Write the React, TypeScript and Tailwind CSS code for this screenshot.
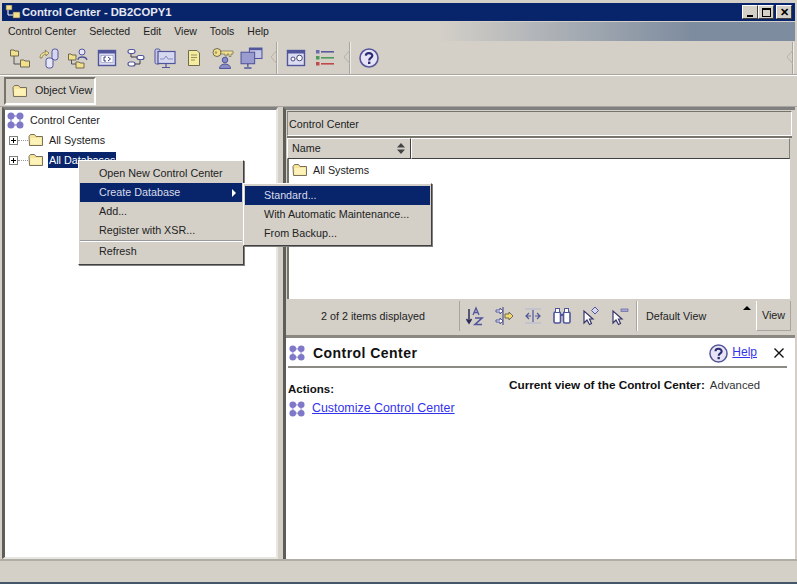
import React from "react";

function Folder({ className = "w-[16px] h-[14px]" }: { className?: string }) {
  return (
    <svg viewBox="0 0 16 14" className={className}>
      <path d="M1 3.5 L2.5 1.5 H6.5 L8 3.5 H14.5 V12.5 H1.5 Z" fill="#f7e49a" stroke="#77705a" strokeWidth="1" />
      <path d="M2.5 5 H13.5 V11.5 H2.5 Z" fill="#fdf2b8" />
    </svg>
  );
}

function Db2Logo({ className = "w-[17px] h-[17px]" }: { className?: string }) {
  return (
    <svg viewBox="0 0 17 17" className={className}>
      <rect x="4" y="4" width="9" height="9" fill="none" stroke="#b9b6e2" strokeWidth="2" />
      <circle cx="4" cy="4" r="3.5" fill="#7f78c8" />
      <circle cx="13" cy="4" r="3.5" fill="#7f78c8" />
      <circle cx="4" cy="13" r="3.5" fill="#7f78c8" />
      <circle cx="13" cy="13" r="3.5" fill="#7f78c8" />
    </svg>
  );
}

function HelpCircle({ className = "w-[20px] h-[20px]" }: { className?: string }) {
  return (
    <svg viewBox="0 0 20 20" className={className}>
      <circle cx="10" cy="10" r="9" fill="#e6e4f6" stroke="#55559a" strokeWidth="1.6" />
      <path d="M6.8 7.6 C7 4.2 13.4 4.2 13.3 7.8 C13.2 10 10.2 9.8 10.2 12.4" fill="none" stroke="#2a2a70" strokeWidth="2.2" />
      <rect x="9" y="13.6" width="2.4" height="2.4" fill="#2a2a70" />
    </svg>
  );
}

const yellow = "#f3e08c";
const edge = "#6f6a50";
const blue = "#50559c";

function ToolIcon({ name }: { name: string }) {
  const box = "w-[22px] h-[22px]";
  if (name === "tree")
    return (
      <svg viewBox="0 0 22 22" className={box}>
        <path d="M5 8 V17 H11" fill="none" stroke="#555" />
        <path d="M1.5 3 H5 L6 4 H9.5 V9 H1.5 Z" fill={yellow} stroke={edge} />
        <path d="M11.5 13 H15 L16 14 H20.5 V20 H11.5 Z" fill={yellow} stroke={edge} />
      </svg>
    );
  if (name === "db")
    return (
      <svg viewBox="0 0 22 22" className={box}>
        <path d="M2 11 C2 7 5 5 8 5 L7 3 L11 6 L8 9 L8 7 C6 7 4 9 4 11 Z" fill={yellow} stroke={edge} strokeWidth="0.7" />
        <rect x="14" y="2" width="6" height="11" rx="2.5" fill="#d6d6ee" stroke={blue} />
        <rect x="8" y="11" width="7" height="10" rx="2.5" fill="#e6e6f6" stroke={blue} />
      </svg>
    );
  if (name === "people")
    return (
      <svg viewBox="0 0 22 22" className={box}>
        <path d="M1.5 7 H4 L5 8 H9 V13 H1.5 Z" fill={yellow} stroke={edge} />
        <path d="M9 15 H12 L13 16 H17 V21 H9 Z" fill={yellow} stroke={edge} />
        <path d="M4.5 13 V17 H9" fill="none" stroke="#555" />
        <circle cx="15" cy="5" r="3" fill="#e6e6f6" stroke={blue} />
        <path d="M11 13 C11 9 19 9 20 13" fill="none" stroke={blue} strokeWidth="1.3" />
      </svg>
    );
  if (name === "cmd")
    return (
      <svg viewBox="0 0 22 22" className={box}>
        <rect x="2.5" y="3.5" width="17" height="15" fill="#dcdcf0" stroke={blue} strokeWidth="1.4" />
        <rect x="3" y="4" width="16" height="2.5" fill={blue} />
        <rect x="5" y="8.5" width="12" height="7" fill="#fff" stroke="#8a8ac0" strokeWidth="0.6" />
        <path d="M10 10 H8 V14 H10 M12 10 L14.5 12 L12 14" fill="none" stroke="#333a80" strokeWidth="1" />
      </svg>
    );
  if (name === "flow")
    return (
      <svg viewBox="0 0 22 22" className={box}>
        <rect x="3" y="2.5" width="7" height="4" rx="2" fill="#fff" stroke={blue} strokeWidth="1.2" />
        <rect x="12" y="8.5" width="7" height="4" rx="2" fill="#fff" stroke={blue} strokeWidth="1.2" />
        <rect x="3" y="15" width="7" height="4" rx="2" fill="#fff" stroke={blue} strokeWidth="1.2" />
        <path d="M6 7 V10 H12 M15 13 V17 H10" fill="none" stroke="#3c3c44" />
      </svg>
    );
  if (name === "monitor")
    return (
      <svg viewBox="0 0 22 22" className="w-[24px] h-[22px]">
        <rect x="1" y="2" width="5" height="15" rx="1.5" fill="#c8c8e6" stroke={blue} />
        <rect x="4" y="4.5" width="17" height="12" fill="#d6d8ee" stroke={blue} strokeWidth="1.2" />
        <path d="M6 12 H10 L12 9 L14 12 H19" fill="none" stroke="#8a8ac8" />
        <path d="M12 17 V20 M8 20.5 H16" stroke={blue} strokeWidth="1.2" />
      </svg>
    );
  if (name === "note")
    return (
      <svg viewBox="0 0 22 22" className={box}>
        <path d="M5.5 3.5 H14 L16.5 6 V18.5 H5.5 Z" fill="#f6ec9e" stroke={edge} />
        <path d="M8 8 H14 M8 10.5 H14 M8 13 H12" stroke="#9a9060" />
      </svg>
    );
  if (name === "key")
    return (
      <svg viewBox="0 0 22 22" className={box}>
        <circle cx="5" cy="5.5" r="4" fill={yellow} stroke={edge} />
        <circle cx="4" cy="5.5" r="1.2" fill="#a89a50" />
        <path d="M9 4 H21 V7 H19 V9.5 H17 V7 H15 V9 H13 V7 H9 Z" fill={yellow} stroke={edge} strokeWidth="0.7" />
        <circle cx="13" cy="13" r="2.8" fill="#8a8cc4" stroke={blue} />
        <path d="M7.5 21.5 C7.5 15.5 18.5 15.5 18.5 21.5 Z" fill="#8a8cc4" stroke={blue} />
      </svg>
    );
  if (name === "screens")
    return (
      <svg viewBox="0 0 22 22" className="w-[23px] h-[23px]">
        <rect x="9" y="1" width="12" height="10" fill="#c4c6e6" stroke={blue} />
        <rect x="9" y="1" width="12" height="2" fill={blue} />
        <rect x="1" y="5" width="13" height="11" fill="#9a9cd0" stroke={blue} />
        <path d="M7.5 16 V19 M4 20 H11" stroke={blue} strokeWidth="1.4" />
      </svg>
    );
  if (name === "settings")
    return (
      <svg viewBox="0 0 22 22" className={box}>
        <rect x="2.5" y="3.5" width="17" height="15" fill="#dcdcf0" stroke={blue} strokeWidth="1.4" />
        <rect x="3" y="4" width="16" height="2.5" fill={blue} />
        <circle cx="8" cy="12" r="2" fill="#fff" stroke="#444a80" />
        <circle cx="14.5" cy="11" r="2.8" fill="#fff" stroke="#444a80" />
      </svg>
    );
  return (
    <svg viewBox="0 0 22 22" className={box}>
      <rect x="2" y="3" width="3.5" height="3.5" fill="#6a6ab0" />
      <rect x="2" y="9" width="3.5" height="3.5" fill="#4f9a5a" />
      <rect x="2" y="15" width="3.5" height="3.5" fill="#c04a4a" />
      <rect x="7" y="4" width="13" height="1.6" fill="#5a5aa0" />
      <rect x="7" y="10" width="13" height="1.6" fill="#4f9a5a" />
      <rect x="7" y="16" width="13" height="1.6" fill="#c04a4a" />
    </svg>
  );
}

function BarIcon({ name }: { name: string }) {
  const box = "w-[20px] h-[20px]";
  if (name === "sort")
    return (
      <svg viewBox="0 0 20 20" className={box}>
        <path d="M4 3 V16 M1.5 13 L4 17 L6.5 13" fill="none" stroke="#2c2c58" strokeWidth="1.5" />
        <path d="M8 9 L11 2 L14 9 M9.2 6.5 H12.8" fill="none" stroke={blue} strokeWidth="1.3" />
        <path d="M10 12 H17 L10 18.5 H17" fill="none" stroke={blue} strokeWidth="1.6" />
      </svg>
    );
  if (name === "filter")
    return (
      <svg viewBox="0 0 20 20" className={box}>
        <path d="M9 1 V19" stroke="#3c3c70" />
        <path d="M2 4 H6 V2 L9 5 L6 8 V6 H2 Z M2 14 H6 V12 L9 15 L6 18 V16 H2 Z" fill="#fff" stroke={blue} />
        <path d="M11 8 H15 V6 L19 10 L15 14 V12 H11 Z" fill="#f0dc70" stroke={edge} />
      </svg>
    );
  if (name === "swap")
    return (
      <svg viewBox="0 0 20 20" className={box}>
        <rect x="2" y="2" width="16" height="2" fill="#c4c2cc" />
        <rect x="2" y="16" width="16" height="2" fill="#c4c2cc" />
        <path d="M8 10 H3 M6 7 L3 10 L6 13 M12 10 H17 M14 7 L17 10 L14 13 M10 4 V16" fill="none" stroke={blue} strokeWidth="1.2" />
      </svg>
    );
  if (name === "binoculars")
    return (
      <svg viewBox="0 0 20 20" className={box}>
        <rect x="2" y="6" width="6.5" height="11" rx="1.5" fill="#fff" stroke={blue} strokeWidth="1.6" />
        <rect x="11.5" y="6" width="6.5" height="11" rx="1.5" fill="#fff" stroke={blue} strokeWidth="1.6" />
        <rect x="3.5" y="2.5" width="4" height="4" fill="#fff" stroke={blue} />
        <rect x="12.5" y="2.5" width="4" height="4" fill="#fff" stroke={blue} />
        <path d="M8.5 9 H11.5" stroke={blue} strokeWidth="2" />
      </svg>
    );
  if (name === "selectPlus")
    return (
      <svg viewBox="0 0 20 20" className={box}>
        <path d="M3 5 L3 17 L6 14 L8.5 18.5 L10.5 17.5 L8.5 13 L12 13 Z" fill="#fff" stroke="#34346a" strokeWidth="1.2" />
        <path d="M14 1 L17.5 4.5 L14 8 L10.5 4.5 Z" fill="#d6d6ee" stroke={blue} />
      </svg>
    );
  return (
    <svg viewBox="0 0 20 20" className={box}>
      <path d="M3 5 L3 17 L6 14 L8.5 18.5 L10.5 17.5 L8.5 13 L12 13 Z" fill="#fff" stroke="#34346a" strokeWidth="1.2" />
      <rect x="11" y="3" width="7" height="2.5" fill="#a8a8d0" stroke={blue} strokeWidth="0.6" />
    </svg>
  );
}

function ToolSep({ className = "w-[15px]" }: { className?: string }) {
  return (
    <div className={`relative h-[32px] shrink-0 ${className}`}>
      <div className="absolute left-[10px] top-0 h-full w-[2px] border-l border-[#a8a59e] bg-white/60" />
      <svg viewBox="0 0 6 14" className="absolute left-[5px] top-[8px] w-[6px] h-[14px]">
        <path d="M6 0 L0 7 L6 14" fill="none" stroke="#b5b2aa" />
      </svg>
    </div>
  );
}

function WinButton({ children, className = "" }: { children: React.ReactNode; className?: string }) {
  return (
    <div className={`flex h-[14px] w-[16px] items-center justify-center bg-[#d4d0c8] border border-t-white border-l-white border-r-[#404040] border-b-[#404040] ${className}`}>
      {children}
    </div>
  );
}

function TreeRow({ label, selected }: { label: string; selected?: boolean }) {
  return (
    <div className="flex h-[20px] items-center">
      <div className="relative ml-[3px] flex h-[9px] w-[9px] items-center justify-center border border-[#808080] bg-white">
        <span className="absolute h-px w-[5px] bg-black" />
        <span className="absolute h-[5px] w-px bg-black" />
      </div>
      <div className="w-[10px] border-t border-dotted border-[#999]" />
      <Folder />
      <span className={`ml-[4px] h-[16px] overflow-hidden whitespace-nowrap px-[1px] leading-[16px] ${selected ? "w-[68px] bg-[#08246b] text-white" : "text-[#222]"}`}>{label}</span>
    </div>
  );
}

function MenuItem({ label, active, arrow }: { label: string; active?: boolean; arrow?: boolean }) {
  return (
    <div className={`flex h-[19px] items-center justify-between pl-[19px] pr-[6px] ${active ? "bg-[#08246b] text-[#d8dcea]" : "text-[#222]"}`}>
      <span>{label}</span>
      {arrow && <span className="h-0 w-0 border-y-[4px] border-l-[4px] border-y-transparent border-l-white" />}
    </div>
  );
}

const raised = "border border-t-white border-l-white border-r-[#404040] border-b-[#404040] shadow-[1px_1px_0_#808080]";

export default function App() {
  return (
    <div className="relative flex h-[584px] w-[797px] flex-col overflow-hidden bg-[#d4d0c8] pt-[3px] font-['Liberation_Sans',Arial,sans-serif] text-[10.75px] text-[#222]">
      {/* title bar */}
      <div className="mx-[2px] flex h-[18px] items-center justify-between bg-[#08246b] pl-[3px] pr-[3px]">
        <div className="flex items-center gap-[1px]">
          <svg viewBox="0 0 16 14" className="w-[16px] h-[14px]">
            <rect x="1" y="0" width="6" height="5" fill="#f3e08c" stroke="#555" strokeWidth="0.6" />
            <rect x="8" y="7" width="7" height="6" fill="#f3e08c" stroke="#555" strokeWidth="0.6" />
            <path d="M3 5 V10 H8" stroke="#fff" fill="none" />
          </svg>
          <span className="text-[11.25px] font-bold text-[#e6e8f2]">Control Center - DB2COPY1</span>
        </div>
        <div className="flex items-center">
          <WinButton>
            <span className="mt-[7px] h-[2px] w-[6px] bg-black" />
          </WinButton>
          <WinButton className="mr-[2px]">
            <span className="h-[9px] w-[9px] border border-t-2 border-black" />
          </WinButton>
          <WinButton>
            <span className="text-[11px] font-bold leading-none text-black">✕</span>
          </WinButton>
        </div>
      </div>

      {/* menu bar */}
      <div className="mx-[2px] mt-px flex h-[19px] items-center gap-[13px] bg-linear-to-r from-[#d4d0c8] from-[55%] to-[#7e8c9f] to-[87%] pl-[6px] text-[10.5px]">
        <span>Control Center</span>
        <span>Selected</span>
        <span>Edit</span>
        <span>View</span>
        <span>Tools</span>
        <span>Help</span>
      </div>

      {/* toolbar */}
      <div className="mt-px flex h-[32px] items-center pl-[5px]">
        {["tree", "db", "people", "cmd", "flow", "monitor", "note", "key", "screens"].map((n) => (
          <div key={n} className="flex h-[29px] w-[29px] shrink-0 items-center justify-center">
            <ToolIcon name={n} />
          </div>
        ))}
        <ToolSep />
        {["settings", "list"].map((n) => (
          <div key={n} className="flex h-[29px] w-[29px] shrink-0 items-center justify-center">
            <ToolIcon name={n} />
          </div>
        ))}
        <ToolSep className="w-[17px]" />
        <div className="flex h-[29px] w-[26px] shrink-0 items-center justify-center">
          <HelpCircle />
        </div>
        <div className="ml-auto">
          <ToolSep />
        </div>
      </div>

      {/* object view strip */}
      <div className="flex h-[33px] items-center border-y border-y-[#a8a59e] pl-[4px] shadow-[inset_0_1px_0_#fff]">
        <div className="flex h-[28px] w-[92px] items-center gap-[7px] border-2 border-t-[#77746c] border-l-[#77746c] border-r-white border-b-white pl-[6px]">
          <Folder />
          <span>Object View</span>
        </div>
      </div>

      {/* split panes */}
      <div className="flex min-h-0 flex-1 px-[2px]">
        <div className="flex w-[276px] shrink-0 flex-col border-t-[3px] border-l-[3px] border-r-2 border-b-2 border-t-[#808080] border-l-[#5f5d58] border-r-[#e8e6e0] border-b-[#e8e6e0] bg-white pl-[1px]">
          <div className="flex h-[20px] items-center gap-[6px] pl-[1px]">
            <Db2Logo />
            <span>Control Center</span>
          </div>
          <TreeRow label="All Systems" />
          <TreeRow label="All Databases" selected />
        </div>
        <div className="w-[5px] shrink-0" />
        <div className="flex min-w-0 flex-1 flex-col border-t-[3px] border-l-[3px] border-t-[#808080] border-l-[#5f5d58]">
          <div className="flex h-[228px] shrink-0 flex-col border-b-[3px] border-b-[#8a8880] pr-[3px]">
            <div className="mt-px ml-px flex h-[25px] shrink-0 items-center border border-t-[#77746c] border-l-[#8a8880] border-r-white border-b-white pl-px pt-[2px]">
              Control Center
            </div>
            <div className="ml-px flex h-[23px] shrink-0 border-t-2 border-t-[#77746c] pr-[2px]">
              <div className="flex w-[124px] items-center justify-between border border-t-white border-l-white border-r-[#404040] border-b-[#404040] pl-[4px] pr-[5px]">
                <span>Name</span>
                <svg viewBox="0 0 8 11" className="w-[8px] h-[11px]">
                  <path d="M4 0 L8 4.5 H0 Z M4 11 L0 6.5 H8 Z" fill="#444" />
                </svg>
              </div>
              <div className="flex-1 border border-t-white border-l-white border-r-[#808080] border-b-[#404040]" />
            </div>
            <div className="ml-px mr-[2px] h-[140px] shrink-0 border-l-2 border-l-[#77746c] bg-white">
              <div className="flex h-[22px] items-center gap-[5px] pl-[3px]">
                <Folder />
                <span>All Systems</span>
              </div>
            </div>
            <div className="mt-[2px] ml-px flex h-[30px] shrink-0 items-stretch">
              <div className="flex w-[172px] items-center justify-center">2 of 2 items displayed</div>
              <div className="flex w-[178px] items-center gap-[9px] border-x border-x-[#a8a59e] pl-[5px]">
                {["sort", "filter", "swap", "binoculars", "selectPlus", "selectMinus"].map((n) => (
                  <BarIcon key={n} name={n} />
                ))}
              </div>
              <div className="relative flex w-[119px] items-center border-l border-l-white pl-[8px]">
                Default View
                <span className="absolute right-[5px] top-[5px] h-0 w-0 border-x-[4px] border-b-[4px] border-x-transparent border-b-black" />
              </div>
              <div className="flex w-[35px] items-center justify-center border-x border-b border-l-white border-r-[#a8a59e] border-b-[#a8a59e]">
                View
              </div>
            </div>
          </div>
          <div className="min-h-0 flex-1 bg-white pl-[2px] pr-[8px]">
            <div className="mt-[1px] flex h-[29px] items-center border-b-2 border-b-[#8c8a84] pt-[1px]">
              <Db2Logo className="ml-[1px] w-[16px] h-[16px]" />
              <span className="ml-[8px] text-[14px] font-bold tracking-[0.45px] text-[#111]">Control Center</span>
              <div className="ml-auto flex items-center">
                <HelpCircle className="w-[19px] h-[19px]" />
                <span className="ml-[4px] mb-[3px] text-[12px] text-[#3333ee] underline">Help</span>
                <svg viewBox="0 0 10 10" className="ml-[17px] mr-[3px] w-[10px] h-[10px]">
                  <path d="M0.5 0.5 L9.5 9.5 M9.5 0.5 L0.5 9.5" stroke="#111" strokeWidth="1.4" />
                </svg>
              </div>
            </div>
            <div className="mt-[8px] flex">
              <div className="w-[221px] pt-[5px] text-[11.5px] font-bold text-[#111]">Actions:</div>
              <div>
                <span className="text-[11.75px] font-bold text-[#111]">Current view of the Control Center:</span>
                <span className="ml-[5px] text-[11.3px] text-[#333]">Advanced</span>
              </div>
            </div>
            <div className="mt-[1px] flex items-center gap-[7px]">
              <Db2Logo className="ml-[1px] w-[16px] h-[16px]" />
              <span className="text-[12.4px] text-[#3333ee] underline">Customize Control Center</span>
            </div>
          </div>
        </div>
      </div>

      {/* status bar */}
      <div className="h-[23px] shrink-0 border-t-2 border-t-[#b0ada6]" />
      <div className="h-[2px] shrink-0 bg-[#46566a]" />

      {/* context menu */}
      <div className={`absolute left-[78px] top-[160px] w-[166px] bg-[#d4d0c8] px-px py-[3px] ${raised}`}>
        <MenuItem label="Open New Control Center" />
        <MenuItem label="Create Database" active arrow />
        <MenuItem label="Add..." />
        <MenuItem label="Register with XSR..." />
        <div className="border-y border-t-[#999] border-b-white" />
        <MenuItem label="Refresh" />
      </div>

      {/* submenu */}
      <div className={`absolute left-[243px] top-[183px] w-[189px] bg-[#d4d0c8] px-px py-[2px] ${raised}`}>
        <MenuItem label="Standard..." active />
        <MenuItem label="With Automatic Maintenance..." />
        <MenuItem label="From Backup..." />
      </div>
    </div>
  );
}
